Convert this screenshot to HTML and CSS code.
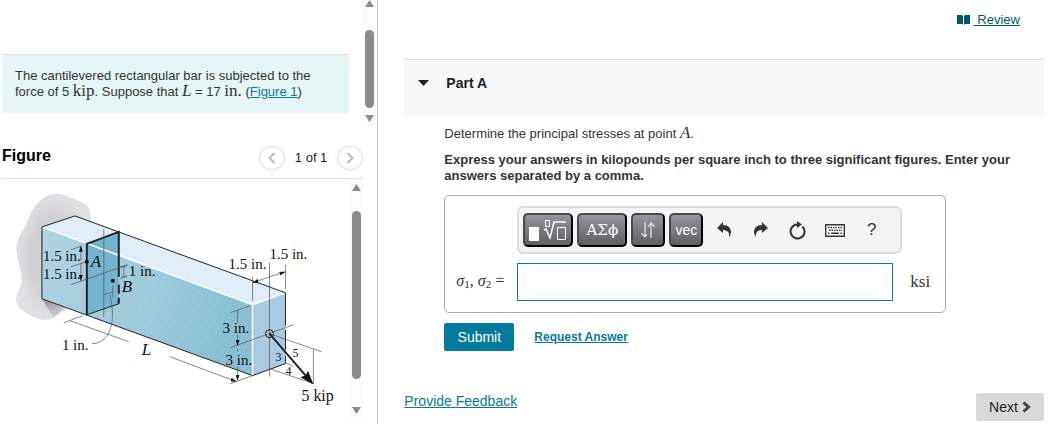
FILE: index.html
```html
<!DOCTYPE html>
<html lang="en">
<head>
    <meta charset="UTF-8">
    <meta name="viewport" content="width=device-width, initial-scale=1.0">
    <title>Principal Stresses - Part A</title>
    <link rel="stylesheet" href="styles.css">
</head>
<body>
    <div class="page">
        <!-- Left side: problem statement and figure -->
        <aside class="side">
            <section class="intro">
                <div class="intro-body">
                    <p class="statement">The cantilevered rectangular bar is subjected to the force of 5 <span class="math">kip</span>. Suppose that <i class="math">L</i> = 17 <span class="math">in.</span> (<a href="#figure">Figure 1</a>)</p>
                </div>
                <div class="scrollbar intro-scroll" aria-hidden="true">
                    <svg width="9" height="7" viewBox="0 0 9 7"><path d="M4.500 0L9 7H0z"/></svg>
                    <span class="thumb"></span>
                    <svg width="9" height="7" viewBox="0 0 9 7"><path d="M0 0h9L4.500 7z"/></svg>
                </div>
            </section>

            <section class="figure" id="figure">
                <header class="figure-head">
                    <h2>Figure</h2>
                    <div class="pager">
                        <button class="round" type="button" aria-label="Previous figure"><svg width="8" height="12" viewBox="0 0 8 12"><path d="M6.500 1L1.500 6l5 5"/></svg></button>
                        <span>1 of 1</span>
                        <button class="round" type="button" aria-label="Next figure"><svg width="8" height="12" viewBox="0 0 8 12"><path d="M1.500 1l5 5-5 5"/></svg></button>
                    </div>
                </header>
                <div class="figure-body">
                    <svg class="drawing" viewBox="0 179 351 236" role="img" aria-label="Cantilevered bar with a 5 kip force">
                        <defs>
                            <linearGradient id="front" x1="0" y1="0" x2="1" y2="0.3">
                                <stop offset="0" stop-color="#b0d3e3"/>
                                <stop offset="0.5" stop-color="#a0cbdd"/>
                                <stop offset="1" stop-color="#84bcd2"/>
                            </linearGradient>
                            <radialGradient id="wall">
                                <stop offset="0.6" stop-color="#d0d0d3"/>
                                <stop offset="1" stop-color="#e0e0e2"/>
                            </radialGradient>
                            <linearGradient id="shade" x1="0" y1="0" x2="0.6" y2="1">
                                <stop offset="0" stop-color="#8c8c90"/>
                                <stop offset="1" stop-color="#d2d2d5"/>
                            </linearGradient>
                            <pattern id="streaks" width="7" height="10" patternUnits="userSpaceOnUse" patternTransform="rotate(28)">
                                <path d="M2 0v10M5 0v10" stroke="#b9dbe8" stroke-width="0.700" opacity="0.500"/>
                            </pattern>
                            <marker id="tip" viewBox="0 0 6 4" refX="6" refY="2" markerWidth="6" markerHeight="4" markerUnits="userSpaceOnUse" orient="auto-start-reverse"><path d="M0 0l6 2-6 2z"/></marker>
                            <marker id="force" viewBox="0 0 14 10" refX="14" refY="5" markerWidth="14" markerHeight="10" markerUnits="userSpaceOnUse" orient="auto"><path d="M0 0l14 5-14 5 2-5z"/></marker>
                        </defs>

                        <!-- wall -->
                        <path fill="url(#wall)" d="M55 194c10-1 15 4 24 7 7 2 12 6 12 17v50L65 311c-8 2-10 9-18 9-9 1-14-3-21-7-6-4-12-9-9-18 3-7 6-12 4-21-2-10-6-21-4-31 2-9 9-16 12-25 4-12 14-23 26-24z"/>
                        <path fill="url(#shade)" d="M42 299l23 8-11 11z"/>

                        <!-- bar -->
                        <path fill="#e0edf8" d="M42 227l33-11 211 77-33 12z"/>
                        <path fill="url(#front)" d="M42 227l211 78v71L42 299z"/>
                        <path fill="url(#streaks)" d="M150 268l103 37v71L132 332z"/>
                        <path fill="#a9cbe2" d="M253 305l33-12v71l-33 12z"/>
                        <path fill="#74b4d0" d="M87 244l32-12v72l-32 11z"/>
                        <path class="highlight" d="M42 227l211 78 33-12M253 305v71"/>
                        <path class="edge" d="M42 299v-72l33-11 211 77v33M286 330v20M286 356v8l-33 12L42 299"/>
                        <path class="edge heavy" d="M87 315v-71l32-12v45M119 285v9M119 298v6"/>
                        <path class="edge" d="M119 304l-32 11"/>

                        <!-- dimension and centre lines -->
                        <g class="thin">
                            <path d="M104 229v88M71 285l56-20M71 250l11-4M71 267l15-5"/>
                            <path d="M119 268l9-3M120 279l7-3M124 267v10M122 267h5M122 277h5"/>
                            <path d="M113 286v12M104 295l9-3M110 295c7 27 0 49-18 49"/>
                            <path d="M64 323l19-7M231 384l22-8M231 313l19-7M231 348l63-23"/>
                            <path d="M270 263v114M253 277v24M286 265v24"/>
                            <path d="M270 334l52 18M314 350v34l-44-15M286 363l8 4"/>
                            <path d="M238 323v-12M238 335v11" marker-end="url(#tip)"/>
                            <path d="M238 352v-3M238 367v14" marker-end="url(#tip)"/>
                            <path d="M129 342l-59-21M170 357l67 25" marker-end="url(#tip)"/>
                            <path d="M81 246v15M81 263v18" marker-start="url(#tip)" marker-end="url(#tip)"/>
                            <path d="M253 283l17-6M270 277l16-5" marker-start="url(#tip)" marker-end="url(#tip)"/>
                        </g>

                        <circle cx="87" cy="262" r="2"/>
                        <circle cx="113" cy="281" r="2"/>
                        <circle class="ring" cx="270" cy="334" r="4"/>
                        <path class="arrow" d="M270 334l38 44"/>
                        <path class="force-line" d="M270 334l44 51" marker-end="url(#force)"/>

                        <text x="43" y="261">1.5 in.</text>
                        <text x="43" y="279">1.5 in.</text>
                        <text class="symbol" x="91" y="267">A</text>
                        <text class="symbol" x="122" y="292">B</text>
                        <text x="129" y="276">1 in.</text>
                        <text x="62" y="350">1 in.</text>
                        <text class="symbol" x="142" y="355">L</text>
                        <text x="229" y="269">1.5 in.</text>
                        <text x="270" y="259">1.5 in.</text>
                        <text x="223" y="333">3 in.</text>
                        <text x="226" y="365">3 in.</text>
                        <text class="small" x="276" y="361">3</text>
                        <text class="small" x="293" y="357">5</text>
                        <text class="small" x="286" y="375">4</text>
                        <text class="load" x="302" y="401">5 kip</text>
                    </svg>
                    <div class="scrollbar figure-scroll" aria-hidden="true">
                        <svg width="9" height="7" viewBox="0 0 9 7"><path d="M4.500 0L9 7H0z"/></svg>
                        <span class="thumb"></span>
                        <svg width="9" height="7" viewBox="0 0 9 7"><path d="M0 0h9L4.500 7z"/></svg>
                    </div>
                </div>
            </section>
        </aside>

        <!-- Right side: question -->
        <main class="main">
            <div class="top">
                <svg width="13" height="10" viewBox="0 0 13 10" aria-hidden="true"><path d="M0 0h5l1 1v9L5 9H0zM13 0H8L7 1v9l1-1h5z"/></svg>
                <a class="review" href="#review">&nbsp;Review</a>
            </div>

            <header class="part">
                <svg width="11" height="6" viewBox="0 0 11 6" aria-hidden="true"><path d="M0 0h11L5.500 6z"/></svg>
                <h2>Part A</h2>
            </header>

            <form class="question">
                <p class="prompt">Determine the principal stresses at point <i class="math">A</i>.</p>
                <p class="hint">Express your answers in kilopounds per square inch to three significant figures. Enter your answers separated by a comma.</p>

                <div class="answer">
                    <div class="toolbar">
                        <button class="key wide" type="button" aria-label="Templates">
                            <svg width="38" height="22" viewBox="0 0 38 22"><path fill="#fff" d="M0 8h10v14H0z"/><path fill="none" stroke="#fff" d="M16.500 1.500h4v6h-4zM28.500 8.500h8v12h-8z"/><path fill="none" stroke="#fff" stroke-width="1.500" d="M15 11l2-1 4 9 4-16h12"/></svg>
                        </button>
                        <button class="key wide greek" type="button">ΑΣϕ</button>
                        <button class="key" type="button" aria-label="Arrows">
                            <svg width="14" height="16" viewBox="0 0 14 16"><path fill="none" stroke="#e8e8ea" stroke-width="1.200" d="M4 0v14M0 11l4 4M10 16V1M7 5l3-4 4 4M4 15l2-3"/></svg>
                        </button>
                        <button class="key" type="button">vec</button>
                        <button class="tool" type="button" aria-label="Undo">
                            <svg width="14" height="16" viewBox="0 0 14 16"><path d="M0 6l6-6v3c5 0 8 3 8 7 0 2-1 4-2 5 1-5-2-7-6-7v3z"/></svg>
                        </button>
                        <button class="tool" type="button" aria-label="Redo">
                            <svg width="14" height="16" viewBox="0 0 14 16"><path d="M14 6L8 0v3c-5 0-8 3-8 7 0 2 1 4 2 5-1-5 2-7 6-7v3z"/></svg>
                        </button>
                        <button class="tool" type="button" aria-label="Reset">
                            <svg width="17" height="19" viewBox="0 0 17 19"><path fill="none" stroke="#333" stroke-width="2" d="M13.500 5.500A7 7 0 1 1 8 3.500h2"/><path d="M8 0l5 3.500L8 7z"/></svg>
                        </button>
                        <button class="tool" type="button" aria-label="Keyboard">
                            <svg width="20" height="13" viewBox="0 0 20 13"><path fill="#fff" stroke="#333" stroke-width="1.400" d="M.7.7h18.600v11.600H.7z"/><path fill="none" stroke="#333" stroke-width="1.500" d="M3 3.500h14M4 6.300h13" stroke-dasharray="1.500 1"/><path fill="none" stroke="#333" stroke-width="1.500" d="M3 9.200h1.500M6 9.200h8M15.500 9.200H17"/></svg>
                        </button>
                        <button class="tool help" type="button" aria-label="Help">?</button>
                    </div>
                    <label class="math" for="stress"><i>σ</i><sub>1</sub>, <i>σ</i><sub>2</sub> =</label>
                    <input id="stress" type="text">
                    <span class="math unit">ksi</span>
                </div>

                <div class="actions">
                    <button class="submit" type="button">Submit</button>
                    <a href="#answer">Request Answer</a>
                </div>
            </form>

            <footer class="foot">
                <a href="#feedback">Provide Feedback</a>
                <button class="next" type="button">Next <svg width="9" height="12" viewBox="0 0 9 12" aria-hidden="true"><path d="M1.500 1.500L6.500 6l-5 4.500"/></svg></button>
            </footer>
        </main>
    </div>
</body>
</html>
```

FILE: styles.css
```css
* {
    box-sizing: border-box;
}
body {
    margin: 0;
    background: #fff;
    font-family: "Liberation Sans", Arial, sans-serif;
    font-size: 13px;
    line-height: 16px;
    color: #333;
}
h2, p {
    margin: 0;
}
a {
    color: #047a9c;
}
button {
    font-family: inherit;
    padding: 0;
    cursor: pointer;
}
svg {
    display: block;
}
.page {
    display: grid;
    grid-template-columns: 14fr 25fr;
    min-height: 100vh;
}
.math {
    font-family: "Liberation Serif", "Times New Roman", serif;
    font-size: 17px;
    line-height: 0;
}

/* Left side */
.side {
    display: flex;
    flex-direction: column;
    border-right: 1px solid #b9c6dc;
}
.intro {
    display: flex;
}
.intro-body {
    flex: 1;
    padding: 54px 13px 12px 2px;
}
.statement {
    padding: 13px 30px 13px 13px;
    background: #e6f6f6;
    border-top: 1px solid #ddd;
}
.scrollbar {
    display: flex;
    flex-direction: column;
    align-items: center;
    background: #fcfcfc;
    fill: #8b8b8b;
}
.thumb {
    flex: 1;
    width: 9px;
    border-radius: 5px;
    background: #8b8b8b;
}
.intro-scroll {
    width: 15px;
    padding-bottom: 3px;
}
.intro-scroll .thumb {
    margin: 23px 0 7px;
}
.figure {
    flex: 1;
    display: flex;
    flex-direction: column;
    padding: 21px 14px 6px 2px;
}
.figure-head {
    display: flex;
    justify-content: space-between;
    padding-bottom: 8px;
    border-bottom: 1px solid #ddd;
}
.figure-head h2 {
    font-size: 16px;
    line-height: 20px;
    color: #000;
}
.pager {
    display: flex;
    align-items: center;
    gap: 10px;
    color: #222;
}
.round {
    display: flex;
    align-items: center;
    justify-content: center;
    width: 26px;
    height: 24px;
    border: 1px solid #ddd;
    border-radius: 50%;
    background: #fff;
}
.round path {
    fill: none;
    stroke: #bbb;
    stroke-width: 2;
}
.figure-body {
    flex: 1;
    display: flex;
    margin-left: -2px;
}
.drawing {
    flex: 1;
    min-width: 0;
    align-self: flex-start;
    font-family: "Liberation Serif", "Times New Roman", serif;
    font-size: 15px;
    fill: #111;
}
.drawing .symbol {
    font-size: 17px;
    font-style: italic;
}
.drawing .small {
    font-size: 12px;
}
.drawing .load {
    font-size: 16px;
}
.edge, .thin, .highlight, .ring, .arrow {
    fill: none;
    stroke: #222;
}
.heavy {
    stroke-width: 2;
}
.thin {
    stroke: #555;
    stroke-width: 0.7;
}
.highlight {
    stroke: #fff;
    stroke-width: 1.5;
}
.arrow {
    stroke-width: 2;
}
.figure-scroll {
    width: 13px;
    padding: 5px 0 4px;
}
.figure-scroll .thumb {
    margin: 20px 0 28px;
}

/* Right side */
.main {
    display: flex;
    flex-direction: column;
    padding: 12px 10px 3px 26px;
}
.top {
    display: flex;
    align-items: center;
    justify-content: flex-end;
    gap: 4px;
    padding-right: 24px;
    fill: #005a70;
}
.review {
    color: #005a70;
}
.part {
    display: flex;
    gap: 17px;
    align-items: flex-start;
    margin-top: 31px;
    padding: 15px 14px 26px;
    border-top: 1px solid #ddd;
    background: #f8f8f8;
    fill: #222;
}
.part svg {
    margin-top: 5px;
}
.part h2 {
    font-size: 14px;
    line-height: 16px;
    color: #222;
}
.question {
    padding: 9px 0 0 40px;
}
.hint {
    margin-top: 10px;
    font-weight: bold;
}
.answer {
    display: grid;
    grid-template-columns: 61px 1fr 52px;
    align-items: center;
    row-gap: 9px;
    max-width: 502px;
    margin-top: 11px;
    padding: 10px 0 11px 11px;
    border: 1px solid #aaa;
    border-radius: 5px;
}
.toolbar {
    grid-column: 2 / -1;
    justify-self: start;
    display: flex;
    align-items: center;
    gap: 4px;
    padding: 5px 12px 5px 4px;
    border: 2px solid #ddd;
    border-radius: 6px;
    background: #f4f4f4;
    fill: #333;
}
.key, .tool {
    display: flex;
    align-items: center;
    justify-content: center;
    height: 34px;
}
.key {
    width: 34px;
    border: 2px solid #000;
    border-top-color: #4a4a4c;
    border-left-color: #4a4a4c;
    border-radius: 5px;
    background: linear-gradient(#96949d, #5f5f61);
    color: #fff;
    font-size: 14px;
}
.wide {
    width: 50px;
}
.greek {
    font-family: "DejaVu Serif", serif;
    font-size: 15px;
}
.tool {
    width: 33px;
    border: 0;
    background: none;
    color: #333;
}
.help {
    font-size: 17px;
}
.answer label {
    font-size: 16px;
}
.answer label sub {
    font-size: 11px;
    vertical-align: -2px;
}
.answer input {
    min-width: 0;
    height: 38px;
    padding: 0 8px;
    border: 1px solid #047a9c;
    font-size: 16px;
}
.unit {
    margin-left: 17px;
}
.actions {
    display: flex;
    align-items: center;
    gap: 20px;
    margin-top: 10px;
    font-size: 12px;
    font-weight: bold;
}
.submit {
    width: 70px;
    height: 28px;
    border: 0;
    border-radius: 2px;
    background: #047a9c;
    color: #fff;
    font-size: 14px;
}
.foot {
    display: flex;
    justify-content: space-between;
    align-items: flex-start;
    margin-top: auto;
    font-size: 14px;
}
.next {
    display: flex;
    align-items: center;
    justify-content: center;
    gap: 4px;
    width: 68px;
    height: 28px;
    border: 0;
    border-radius: 2px;
    background: #d9d9d9;
    color: #222;
    font-size: 14px;
}
.next path {
    fill: none;
    stroke: #444;
    stroke-width: 3;
}
```
